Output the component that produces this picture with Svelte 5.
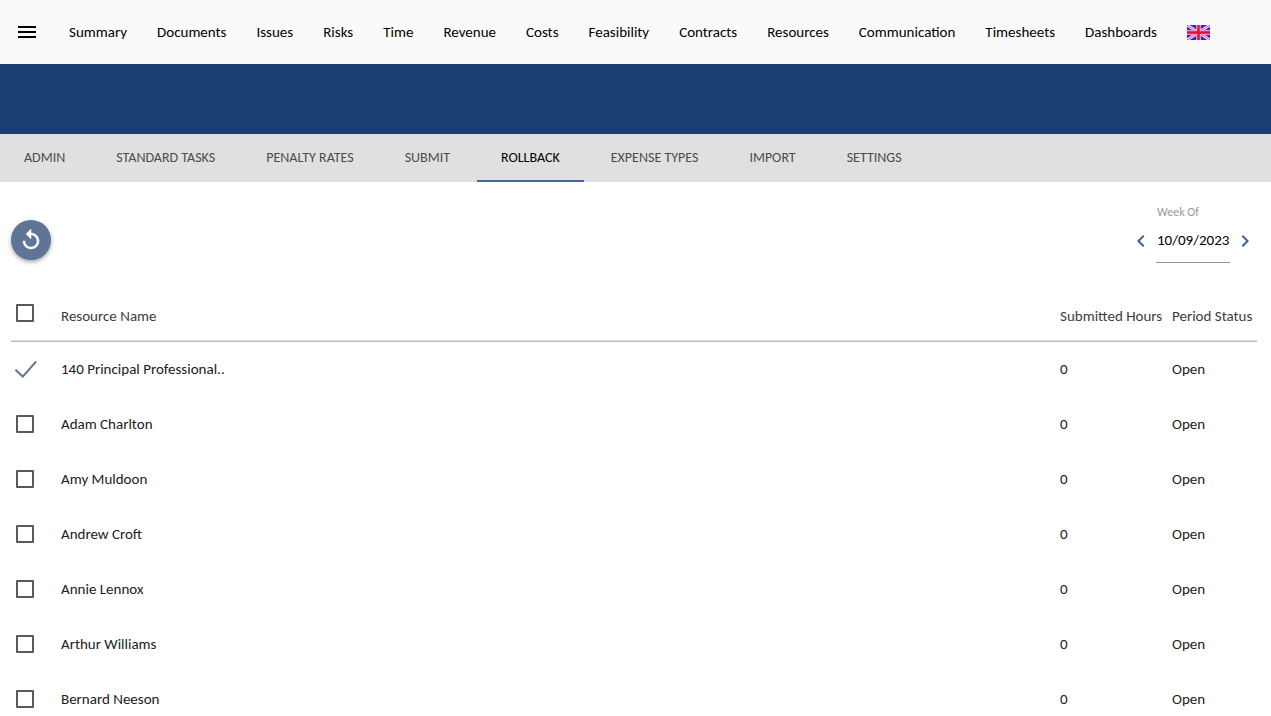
<script>
  const menu = [
    "Summary",
    "Documents",
    "Issues",
    "Risks",
    "Time",
    "Revenue",
    "Costs",
    "Feasibility",
    "Contracts",
    "Resources",
    "Communication",
    "Timesheets",
    "Dashboards",
  ];

  const tabs = [
    "Admin",
    "Standard Tasks",
    "Penalty Rates",
    "Submit",
    "Rollback",
    "Expense Types",
    "Import",
    "Settings",
  ];

  let activeTab = $state("Rollback");
  let weekOf = $state("10/09/2023");

  let resources = $state([
    { name: "140 Principal Professional..", hours: 0, status: "Open", selected: true },
    { name: "Adam Charlton", hours: 0, status: "Open", selected: false },
    { name: "Amy Muldoon", hours: 0, status: "Open", selected: false },
    { name: "Andrew Croft", hours: 0, status: "Open", selected: false },
    { name: "Annie Lennox", hours: 0, status: "Open", selected: false },
    { name: "Arthur Williams", hours: 0, status: "Open", selected: false },
    { name: "Bernard Neeson", hours: 0, status: "Open", selected: false },
  ]);

  let allSelected = $derived(resources.every((r) => r.selected));

  function toggleAll() {
    const value = !allSelected;
    resources.forEach((r) => (r.selected = value));
  }

  // dates are kept as dd/mm/yyyy
  function moveWeek(days) {
    const [d, m, y] = weekOf.split("/").map(Number);
    const date = new Date(y, m - 1, d + days);
    const pad = (n) => String(n).padStart(2, "0");
    weekOf = `${pad(date.getDate())}/${pad(date.getMonth() + 1)}/${date.getFullYear()}`;
  }
</script>

{#snippet tick()}
  <svg class="tick" viewBox="0 0 24 24" aria-hidden="true">
    <path d="M-.6 12.8 6.8 19.6 20.2 4.4" fill="none" stroke="#5e7595" stroke-width="2" />
  </svg>
{/snippet}

<header>
  <button class="menu-button" aria-label="Menu">
    <svg viewBox="0 0 24 24" width="24" height="24">
      <path d="M3 18h18v-2H3v2zm0-5h18v-2H3v2zm0-7v2h18V6H3z" />
    </svg>
  </button>
  <nav>
    {#each menu as item}
      <a href="#{item.toLowerCase()}">{item}</a>
    {/each}
  </nav>
  <button class="language" aria-label="English">
    <svg viewBox="0 0 23 15" width="23" height="15">
      <rect width="23" height="15" fill="#3a1fd8" />
      <path d="M0 0 23 15M23 0 0 15" stroke="#efdcf2" stroke-width="3" />
      <path d="M0 0 23 15M23 0 0 15" stroke="#d8609c" stroke-width="1" />
      <path d="M11.5 0v15M0 7.5h23" stroke="#e29cc8" stroke-width="5" />
      <path d="M11.5 0v15M0 7.5h23" stroke="#e0103c" stroke-width="2.4" />
    </svg>
  </button>
</header>

<div class="banner"></div>

<div class="tabs" role="tablist">
  {#each tabs as tab}
    <button
      role="tab"
      aria-selected={tab === activeTab}
      class:active={tab === activeTab}
      onclick={() => (activeTab = tab)}>{tab}</button
    >
  {/each}
</div>

<main>
  <div class="toolbar">
    <button class="rollback" aria-label="Rollback">
      <svg viewBox="0 0 24 24" width="24" height="24">
        <path
          d="M12 5V1L7 6l5 5V7c3.31 0 6 2.69 6 6s-2.69 6-6 6-6-2.69-6-6H4c0 4.42 3.58 8 8 8s8-3.58 8-8-3.58-8-8-8z"
        />
      </svg>
    </button>

    <div class="week">
      <label for="week-of">Week Of</label>
      <button aria-label="Previous week" onclick={() => moveWeek(-7)}>
        <svg viewBox="0 0 24 24" width="24" height="24">
          <path d="M15.41 7.41 14 6l-6 6 6 6 1.41-1.41L10.83 12z" />
        </svg>
      </button>
      <input id="week-of" type="text" bind:value={weekOf} />
      <button aria-label="Next week" onclick={() => moveWeek(7)}>
        <svg viewBox="0 0 24 24" width="24" height="24">
          <path d="M10 6 8.59 7.41 13.17 12l-4.58 4.59L10 18l6-6z" />
        </svg>
      </button>
    </div>
  </div>

  <table>
    <thead>
      <tr>
        <th class="check">
          <label class="box">
            <input
              type="checkbox"
              aria-label="Select all"
              checked={allSelected}
              onchange={toggleAll}
            />
            {#if allSelected}{@render tick()}{/if}
          </label>
        </th>
        <th>Resource Name</th>
        <th class="hours">Submitted Hours</th>
        <th class="status">Period Status</th>
      </tr>
    </thead>
    <tbody>
      {#each resources as resource}
        <tr>
          <td class="check">
            <label class="box">
              <input
                type="checkbox"
                aria-label="Select {resource.name}"
                bind:checked={resource.selected}
              />
              {#if resource.selected}{@render tick()}{/if}
            </label>
          </td>
          <td>{resource.name}</td>
          <td>{resource.hours}</td>
          <td>{resource.status}</td>
        </tr>
      {/each}
    </tbody>
  </table>
</main>

<style>
  :global(body) {
    background-color: #ffffff;
    color: #212121;
    font-family: Calibri, Carlito, Lato, sans-serif;
    font-size: 15px;
  }
  button {
    padding: 0;
    border: none;
    background: none;
    font: inherit;
    color: inherit;
    cursor: pointer;
  }
  svg {
    display: block;
  }

  header {
    display: flex;
    align-items: center;
    height: 64px;
    padding-left: 15px;
    background-color: #fafafa;
    color: #000000;
  }
  nav {
    display: flex;
    gap: 30px;
    margin: 0 30px;
  }
  nav a {
    color: inherit;
    line-height: 20px;
    text-decoration: none;
  }

  .banner {
    height: 70px;
    background-color: #1c3f72;
  }

  .tabs {
    display: flex;
    gap: 3px;
    height: 48px;
    background-color: #e0e0e0;
  }
  .tabs button {
    padding: 0 24px;
    border-bottom: 2px solid transparent;
    color: #4c4c4c;
    font-size: 14px;
    text-transform: uppercase;
  }
  .tabs button.active {
    border-bottom-color: #4666a0;
    color: #000000;
  }

  main {
    padding: 0 14px 0 11px;
  }
  .toolbar {
    display: flex;
    justify-content: space-between;
    align-items: flex-start;
    height: 104px;
  }
  .rollback {
    display: grid;
    place-items: center;
    width: 40px;
    height: 40px;
    margin-top: 38px;
    border-radius: 50%;
    background-color: #5e7595;
    box-shadow: 0 2px 4px rgba(0, 0, 0, 0.35);
    fill: #ffffff;
    stroke: #ffffff;
    stroke-width: 0.5;
  }

  .week {
    display: grid;
    grid-template-columns: 24px 74px 24px;
    column-gap: 3px;
    align-items: center;
    padding-top: 22px;
    fill: #3f5f9c;
  }
  .week label {
    grid-column: 2 / 4;
    padding-left: 1px;
    color: #9a9a9a;
    font-size: 12px;
    line-height: 16px;
  }
  .week button,
  .week input {
    grid-row: 2;
  }
  .week button {
    padding-bottom: 1px;
  }
  .week input {
    box-sizing: border-box;
    width: 100%;
    height: 43px;
    padding: 0 0 2px 1px;
    border: none;
    border-bottom: 1px solid #949494;
    background: none;
    color: #000000;
    font: inherit;
  }

  table {
    width: 100%;
    border-collapse: separate;
    border-spacing: 0;
    table-layout: fixed;
  }
  th,
  td {
    box-sizing: border-box;
    height: 55px;
    padding: 0 0 2px 5px;
    text-align: left;
    font-weight: 400;
    white-space: nowrap;
  }
  th {
    height: 56px;
    padding: 4px 0 0 5px;
    border-bottom: 1px solid #bdbdbd;
    box-shadow: inset 0 -1px #e0e0e0;
    color: #3c3c3c;
  }
  th.check {
    padding-top: 0;
    padding-bottom: 1px;
  }
  .check {
    width: 45px;
  }
  .hours {
    width: 112px;
  }
  .status {
    width: 90px;
  }

  .box {
    display: grid;
    place-items: center start;
    width: 24px;
  }
  .box input,
  .tick {
    grid-area: 1 / 1;
  }
  .box input {
    appearance: none;
    width: 18px;
    height: 18px;
    margin: 0;
    border: 2px solid #5a5a5a;
    border-radius: 1px;
  }
  .box input:checked {
    border-color: transparent;
  }
  .tick {
    width: 24px;
    height: 24px;
    overflow: visible;
    pointer-events: none;
  }
</style>
